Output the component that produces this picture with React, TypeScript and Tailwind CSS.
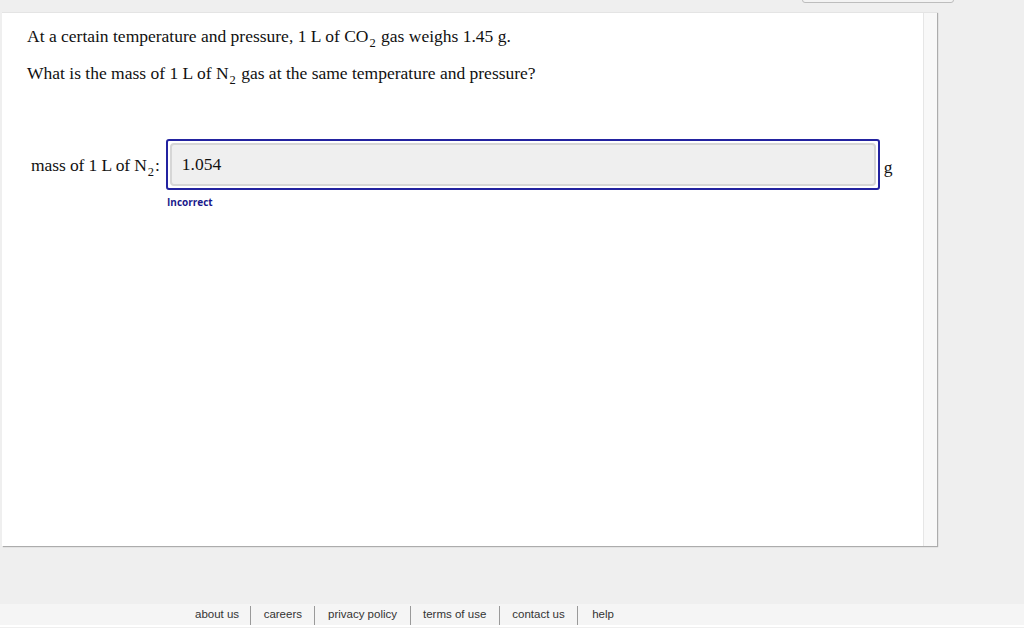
export default function App() {
  const links = ["about us", "careers", "privacy policy", "terms of use", "contact us", "help"];

  const Sub = () => <span className="relative top-[5px] ml-[1px] mr-[1px] text-[12.5px] leading-none">2</span>;

  return (
    <div className="relative flex h-[628px] w-[1024px] flex-col overflow-hidden bg-[#efefef]">
      {/* top-right tab edge */}
      <div className="absolute left-[802px] top-[-10px] h-[13px] w-[152px] rounded-b-[3px] border border-[#bdbdbd] bg-[#f3f3f3]" />

      <div className="ml-[2px] mt-[12px] flex h-[534px] w-[935px] border-t border-[#e4e4e4] bg-white shadow-[1px_1px_1px_rgba(0,0,0,0.28)]">
        <div className="flex-1 pl-[25px] pt-[11px] text-[17.5px] text-[#111] [font-family:'Liberation_Serif',serif]">
          <p className="leading-[24px]">
            At a certain temperature and pressure, 1 L of CO<Sub /> gas weighs 1.45 g.
          </p>
          <p className="mt-[13px] leading-[24px]">
            What is the mass of 1 L of N<Sub /> gas at the same temperature and pressure?
          </p>

          <div className="mt-[54px] flex items-center">
            <span className="ml-[4px] mr-[6px] pt-[2px] tracking-[-0.1px]">
              mass of 1 L of N<Sub />:
            </span>
            <div className="h-[51px] w-[714px] rounded-[3px] border-2 border-[#2323a0] p-[2px]">
              <div className="flex h-full items-center rounded-[4px] border-2 border-[#d6d6d6] bg-[#efefef] pl-[10px]">
                1.054
              </div>
            </div>
            <span className="ml-[4px] pt-[6px]">g</span>
          </div>
          <div className="ml-[140px] mt-[5px] text-[10px] font-bold text-[#1a1a8c] [font-family:'Open_Sans',sans-serif]">
            Incorrect
          </div>
        </div>
        <div className="w-[14px] border-l border-[#e6e6e6] bg-[#f8f8f8]" />
      </div>

      <div className="mt-[58px] flex h-[21px] items-center bg-[#f5f5f5] pl-[195px] pt-[1px] text-[11.5px] text-[#333] [font-family:'Liberation_Sans',sans-serif]">
        {links.map((l, i) => (
          <span
            key={l}
            className={`flex h-[19px] items-center ${i === 0 ? "pr-[11px]" : "border-l border-[#9a9a9a] px-[12.5px]"} ${
              i === links.length - 1 ? "pl-[14px]" : ""
            }`}
          >
            {l}
          </span>
        ))}
      </div>
      <div className="h-[2px] bg-white" />
    </div>
  );
}
